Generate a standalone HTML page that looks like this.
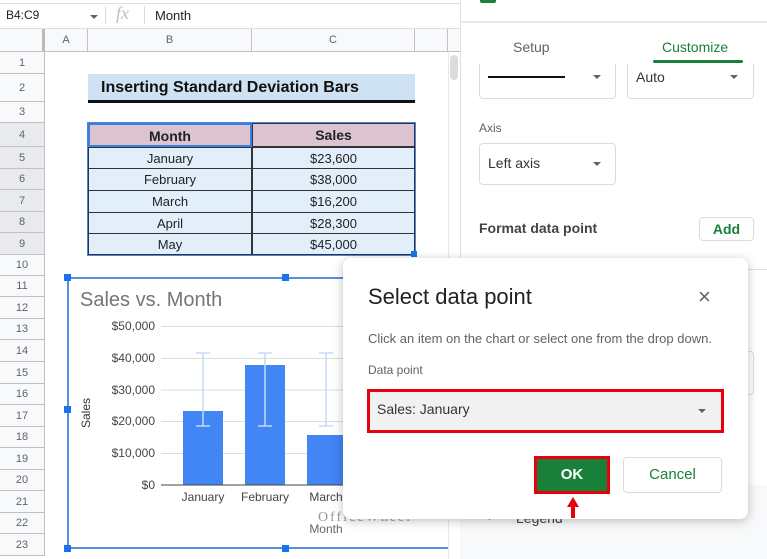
<!DOCTYPE html><html><head><meta charset="utf-8"><style>
*{box-sizing:border-box;margin:0;padding:0}
body{width:767px;height:559px;overflow:hidden;background:#fff;font-family:"Liberation Sans",Arial,sans-serif;position:relative}
.a{position:absolute}
.rh{position:absolute;left:0;width:45px;border-bottom:1px solid #c0c0c0;background:#f8f9fa;color:#5f6368;font-size:11px;text-align:center;border-right:1px solid #c0c0c0}
.cell{position:absolute;text-align:center;font-size:13px;color:#222;border:1px solid #333;background:#e3eefb}
.ch{position:absolute;top:29px;height:23px;border-right:1px solid #c0c0c0;border-bottom:1px solid #c0c0c0;background:#f8f9fa;color:#5f6368;font-size:11px;text-align:center;line-height:23px}
.yl{position:absolute;right:612px;font-size:12px;color:#444;text-align:right}
.dd{position:absolute;border:1px solid #dadce0;border-radius:4px;background:#fff}
.tri{position:absolute;width:0;height:0;border-left:4px solid transparent;border-right:4px solid transparent;border-top:4px solid #5f6368}
</style></head><body>
<div class="a" style="left:0;top:0;width:460px;height:4px;border-bottom:1px solid #e0e0e0"></div>
<div class="a" style="left:6px;top:8px;font-size:12px;color:#222">B4:C9</div>
<div class="tri" style="left:90px;top:15px"></div>
<div class="a" style="left:105px;top:6px;width:1px;height:18px;background:#dadce0"></div>
<div class="a" style="left:116px;top:3px;font-size:18px;color:#c0c0c0;font-style:italic;font-family:'Liberation Serif',serif">fx</div>
<div class="a" style="left:144px;top:6px;width:1px;height:18px;background:#dadce0"></div>
<div class="a" style="left:155px;top:8px;font-size:13px;color:#222">Month</div>
<div class="a" style="left:0;top:28px;width:460px;height:1px;background:#e0e0e0"></div>
<div class="ch" style="left:0;width:45px;border-right:3px solid #bbb"></div>
<div class="ch" style="left:45px;width:43px">A</div>
<div class="ch" style="left:88px;width:164px">B</div>
<div class="ch" style="left:252px;width:163px">C</div>
<div class="ch" style="left:415px;width:33px"></div>
<div class="ch" style="left:448px;width:12px;border-right:none"></div>
<div class="rh" style="top:52px;height:22px;line-height:22px">1</div>
<div class="rh" style="top:74px;height:28px;line-height:28px">2</div>
<div class="rh" style="top:102px;height:21px;line-height:21px">3</div>
<div class="rh" style="top:123px;height:24px;line-height:24px;background:#e8eaed">4</div>
<div class="rh" style="top:147px;height:22px;line-height:22px;background:#e8eaed">5</div>
<div class="rh" style="top:169px;height:21px;line-height:21px;background:#e8eaed">6</div>
<div class="rh" style="top:190px;height:22px;line-height:22px;background:#e8eaed">7</div>
<div class="rh" style="top:212px;height:21px;line-height:21px;background:#e8eaed">8</div>
<div class="rh" style="top:233px;height:22px;line-height:22px;background:#e8eaed">9</div>
<div class="rh" style="top:255px;height:21px;line-height:21px">10</div>
<div class="rh" style="top:276px;height:21px;line-height:21px">11</div>
<div class="rh" style="top:297px;height:22px;line-height:22px">12</div>
<div class="rh" style="top:319px;height:21px;line-height:21px">13</div>
<div class="rh" style="top:340px;height:22px;line-height:22px">14</div>
<div class="rh" style="top:362px;height:22px;line-height:22px">15</div>
<div class="rh" style="top:384px;height:21px;line-height:21px">16</div>
<div class="rh" style="top:405px;height:22px;line-height:22px">17</div>
<div class="rh" style="top:427px;height:21px;line-height:21px">18</div>
<div class="rh" style="top:448px;height:22px;line-height:22px">19</div>
<div class="rh" style="top:470px;height:21px;line-height:21px">20</div>
<div class="rh" style="top:491px;height:22px;line-height:22px">21</div>
<div class="rh" style="top:513px;height:21px;line-height:21px">22</div>
<div class="rh" style="top:534px;height:22px;line-height:22px">23</div>
<div class="a" style="left:448px;top:52px;width:12px;height:507px;background:#fff;border-left:1px solid #e8e8e8"></div>
<div class="a" style="left:450px;top:55px;width:8px;height:25px;border-radius:4px;background:#dadce0"></div>
<div class="a" style="left:88px;top:74px;width:327px;height:26px;background:#cfe2f3;font-weight:bold;font-size:16px;line-height:28px;padding-left:13px;color:#111">Inserting Standard Deviation Bars</div>
<div class="a" style="left:88px;top:100px;width:327px;height:3px;background:#111"></div>
<div class="cell" style="left:88px;top:123px;width:164px;height:24px;line-height:22px;background:#dcc3d0;font-weight:bold;font-size:14px;border:2px solid #3b7fe0">Month</div>
<div class="cell" style="left:252px;top:123px;width:163px;height:24px;line-height:22px;background:#dcc3d0;font-weight:bold;font-size:14px">Sales</div>
<div class="cell" style="left:88px;top:147px;width:164px;height:22px;line-height:21px">January</div>
<div class="cell" style="left:252px;top:147px;width:163px;height:22px;line-height:21px">$23,600</div>
<div class="cell" style="left:88px;top:168px;width:164px;height:23px;line-height:22px">February</div>
<div class="cell" style="left:252px;top:168px;width:163px;height:23px;line-height:22px">$38,000</div>
<div class="cell" style="left:88px;top:190px;width:164px;height:23px;line-height:21px">March</div>
<div class="cell" style="left:252px;top:190px;width:163px;height:23px;line-height:21px">$16,200</div>
<div class="cell" style="left:88px;top:212px;width:164px;height:22px;line-height:21px">April</div>
<div class="cell" style="left:252px;top:212px;width:163px;height:22px;line-height:21px">$28,300</div>
<div class="cell" style="left:88px;top:233px;width:164px;height:22px;line-height:21px">May</div>
<div class="cell" style="left:252px;top:233px;width:163px;height:22px;line-height:21px">$45,000</div>
<div class="a" style="left:87px;top:122px;width:329px;height:134px;border:1px solid #4a86e8"></div>
<div class="a" style="left:411px;top:251px;width:6px;height:6px;background:#1a73e8"></div>
<div class="a" style="left:67px;top:277px;width:381px;height:272px;border:2px solid #5a8fe0;border-right:none;background:#fff"></div>
<div class="a" style="left:64px;top:274px;width:7px;height:7px;background:#1a73e8"></div>
<div class="a" style="left:282px;top:274px;width:7px;height:7px;background:#1a73e8"></div>
<div class="a" style="left:64px;top:406px;width:7px;height:7px;background:#1a73e8"></div>
<div class="a" style="left:64px;top:545px;width:7px;height:7px;background:#1a73e8"></div>
<div class="a" style="left:282px;top:545px;width:7px;height:7px;background:#1a73e8"></div>
<div class="a" style="left:80px;top:289px;font-size:20px;color:#757575">Sales vs. Month</div>
<svg class="a" style="left:0;top:0" width="448" height="559">
<g stroke="#ddd" stroke-width="1">
<line x1="161" y1="326.5" x2="448" y2="326.5"/><line x1="161" y1="358.5" x2="448" y2="358.5"/>
<line x1="161" y1="390" x2="448" y2="390"/><line x1="161" y1="421.5" x2="448" y2="421.5"/>
<line x1="161" y1="453.5" x2="448" y2="453.5"/></g>
<rect x="183" y="411" width="40" height="74" fill="#4285f4"/>
<rect x="245" y="365" width="40" height="120" fill="#4285f4"/>
<rect x="307" y="435" width="40" height="50" fill="#4285f4"/>
<line x1="161" y1="485" x2="448" y2="485" stroke="#444"/>
<g stroke="#c6d8f8" stroke-width="1.5">
<line x1="203" y1="353" x2="203" y2="426"/><line x1="196" y1="353" x2="210" y2="353"/><line x1="196" y1="426" x2="210" y2="426"/>
<line x1="265" y1="353" x2="265" y2="426"/><line x1="258" y1="353" x2="272" y2="353"/><line x1="258" y1="426" x2="272" y2="426"/>
<line x1="326" y1="353" x2="326" y2="426"/><line x1="319" y1="353" x2="333" y2="353"/><line x1="319" y1="426" x2="333" y2="426"/>
</g>
<text x="90" y="413" transform="rotate(-90 90 413)" font-size="12" fill="#333" text-anchor="middle" font-family="Liberation Sans">Sales</text>
<g font-size="12" fill="#444" text-anchor="middle" font-family="Liberation Sans">
<text x="203" y="501">January</text><text x="265" y="501">February</text><text x="326" y="501">March</text><text x="326" y="533" fill="#666">Month</text></g>
</svg>
<div class="yl" style="top:319px">$50,000</div>
<div class="yl" style="top:351px">$40,000</div>
<div class="yl" style="top:383px">$30,000</div>
<div class="yl" style="top:414px">$20,000</div>
<div class="yl" style="top:446px">$10,000</div>
<div class="yl" style="top:478px">$0</div>
<div class="a" style="left:460px;top:0;width:307px;height:559px;background:#fff;border-left:1px solid #e0e0e0"></div>
<div class="a" style="left:480px;top:0;width:16px;height:3px;background:#188038;border-radius:0 0 2px 2px"></div>
<div class="a" style="left:460px;top:21px;width:307px;height:2px;background:#e8e8e8"></div>
<div class="a" style="left:513px;top:39px;font-size:14px;color:#5f6368">Setup</div>
<div class="a" style="left:662px;top:39px;font-size:14px;color:#188038">Customize</div>
<div class="a" style="left:653px;top:60px;width:90px;height:3px;background:#188038;border-radius:2px"></div>
<div class="dd" style="left:479px;top:64px;width:137px;height:35px;border-top:none;border-radius:0 0 4px 4px"></div>
<div class="a" style="left:488px;top:76px;width:77px;height:2px;background:#111"></div>
<div class="tri" style="left:593px;top:75px"></div>
<div class="dd" style="left:627px;top:64px;width:127px;height:35px;border-top:none;border-radius:0 0 4px 4px"></div>
<div class="a" style="left:636px;top:69px;font-size:14px;color:#333">Auto</div>
<div class="tri" style="left:730px;top:75px"></div>
<div class="a" style="left:479px;top:121px;font-size:12px;color:#5f6368">Axis</div>
<div class="dd" style="left:479px;top:143px;width:137px;height:42px"></div>
<div class="a" style="left:488px;top:155px;font-size:14px;color:#333">Left axis</div>
<div class="tri" style="left:593px;top:162px"></div>
<div class="a" style="left:479px;top:220px;font-size:14px;color:#444;font-weight:bold">Format data point</div>
<div class="dd" style="left:699px;top:217px;width:55px;height:24px;text-align:center;line-height:22px;font-size:14px;font-weight:bold;color:#188038">Add</div>
<div class="a" style="left:460px;top:485px;width:307px;height:74px;background:#f8f9fa"></div>
<div class="a" style="left:745px;top:269px;width:22px;height:1px;background:#e0e0e0"></div>
<div class="dd" style="left:700px;top:351px;width:54px;height:44px"></div>
<div class="a" style="left:516px;top:510px;font-size:14px;color:#444">Legend</div>
<div class="a" style="left:488px;top:508px;font-size:14px;color:#888">›</div>
<div class="a" style="left:318px;top:510px;font-size:14px;letter-spacing:2px;color:#999;font-family:'Liberation Serif',serif">OfficeWheel</div>
<div class="a" style="left:343px;top:258px;width:405px;height:261px;background:#fff;border-radius:8px;box-shadow:0 2px 10px rgba(0,0,0,.25)"></div>
<div class="a" style="left:368px;top:284px;font-size:22px;color:#202124">Select data point</div>
<div class="a" style="left:698px;top:284px;font-size:22px;color:#5f6368">×</div>
<div class="a" style="left:368px;top:331px;font-size:13px;color:#5f6368">Click an item on the chart or select one from the drop down.</div>
<div class="a" style="left:368px;top:363px;font-size:12px;color:#5f6368">Data point</div>
<div class="a" style="left:367px;top:389px;width:357px;height:44px;background:#f1f1f1;border:3px solid #e8000d"></div>
<div class="a" style="left:377px;top:401px;font-size:14px;color:#333">Sales: January</div>
<div class="tri" style="left:698px;top:409px"></div>
<div class="a" style="left:534px;top:456px;width:76px;height:38px;background:#188038;border:3px solid #e8000d;color:#fff;font-weight:bold;font-size:15px;text-align:center;line-height:32px">OK</div>
<div class="a" style="left:623px;top:457px;width:99px;height:36px;border:1px solid #dadce0;border-radius:4px;color:#188038;font-size:15px;text-align:center;line-height:34px">Cancel</div>
<svg class="a" style="left:566px;top:497px" width="14" height="22"><polygon points="7,0 13,10 9,10 9,21 5,21 5,10 1,10" fill="#e8000d"/></svg>
</body></html>
